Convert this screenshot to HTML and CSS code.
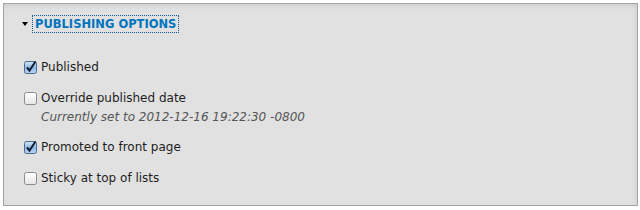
FILE: index.html
```html
<!DOCTYPE html>
<html lang="en">
<head>
  <meta charset="UTF-8" />
  <title>Publishing options</title>
  <link rel="stylesheet" href="styles.css">
</head>
<body>
  <fieldset class="options">
    <legend class="options-title">
      <span class="arrow"></span>
      <a href="#" class="options-link">Publishing options</a>
    </legend>
    <div class="item">
      <label class="check">
        <svg class="box" width="14" height="14" viewBox="0 0 14 14">
          <defs>
            <linearGradient id="on" x1="0" y1="0" x2="0" y2="1">
              <stop offset="0" stop-color="#d7e7f7"/>
              <stop offset="0.5" stop-color="#8fb8e2"/>
              <stop offset="1" stop-color="#b9d6f2"/>
            </linearGradient>
          </defs>
          <rect x="0.5" y="1.5" width="12" height="12" rx="2" fill="url(#on)" stroke="#4a6b93"/>
          <path d="M3 7.5 L5.5 10.5 L11.5 1.5" fill="none" stroke="#0d1c33" stroke-width="2"/>
        </svg>
        Published
      </label>
    </div>
    <div class="item">
      <label class="check">
        <svg class="box" width="14" height="14" viewBox="0 0 14 14">
          <defs>
            <linearGradient id="off" x1="0" y1="0" x2="0" y2="1">
              <stop offset="0" stop-color="#ffffff"/>
              <stop offset="1" stop-color="#e6e6e6"/>
            </linearGradient>
          </defs>
          <rect x="0.5" y="1.5" width="12" height="12" rx="2" fill="url(#off)" stroke="#8a8a8a"/>
        </svg>
        Override published date
      </label>
      <div class="note">Currently set to 2012-12-16 19:22:30 -0800</div>
    </div>
    <div class="item">
      <label class="check">
        <svg class="box" width="14" height="14" viewBox="0 0 14 14">
          <rect x="0.5" y="1.5" width="12" height="12" rx="2" fill="url(#on)" stroke="#4a6b93"/>
          <path d="M3 7.5 L5.5 10.5 L11.5 1.5" fill="none" stroke="#0d1c33" stroke-width="2"/>
        </svg>
        Promoted to front page
      </label>
    </div>
    <div class="item">
      <label class="check">
        <svg class="box" width="14" height="14" viewBox="0 0 14 14">
          <rect x="0.5" y="1.5" width="12" height="12" rx="2" fill="url(#off)" stroke="#8a8a8a"/>
        </svg>
        Sticky at top of lists
      </label>
    </div>
  </fieldset>
</body>
</html>
```

FILE: styles.css
```css
body {
  margin: 0;
  padding: 3px 2px 0 3px;
  background: #fff;
  font-family: "DejaVu Sans", sans-serif;
  font-size: 12px;
  color: #1e1e1e;
}
.options {
  margin: 0;
  padding: 0 0 12px 20px;
  box-sizing: border-box;
  height: 203px;
  background: #e1e1e1;
  border: 1px solid #a3a3a3;
  box-shadow: inset 0 4px 4px -2px #cfcfcf, inset -4px 0 4px -2px #d6d6d6;
  position: relative;
}
.options-title {
  position: absolute;
  top: 12px;
  left: 18px;
  padding: 0;
  display: flex;
  align-items: center;
}
.arrow {
  width: 0;
  height: 0;
  border-left: 3px solid transparent;
  border-right: 3px solid transparent;
  border-top: 4px solid #000;
  margin-right: 5px;
}
.options-link {
  color: #0074bd;
  font-weight: bold;
  text-transform: uppercase;
  text-decoration: none;
  font-size: 11.5px;
  padding: 1px 2px;
  outline: 1px dotted #0a5c9a;
}
.options > .item:first-of-type {
  margin-top: 55px;
}
.item {
  margin-bottom: 15px;
}
.check {
  display: flex;
  align-items: center;
  gap: 3px;
  height: 16px;
}
.box {
  flex: none;
}
.note {
  margin: 4px 0 0 17px;
  font-style: italic;
  color: #555;
}
```
